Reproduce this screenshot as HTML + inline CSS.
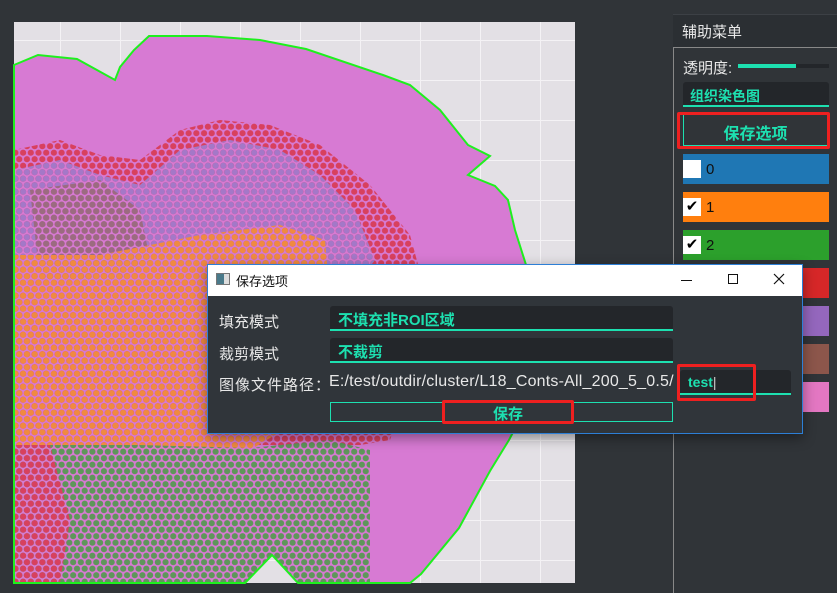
<!DOCTYPE html>
<html><head><meta charset="utf-8"><style>
*{margin:0;padding:0;box-sizing:border-box}
body{width:837px;height:593px;background:#303438;position:relative;overflow:hidden;font-family:"Liberation Sans","Noto Sans CJK SC",sans-serif}
.abs{position:absolute}
.teal{color:#1de0b0;font-weight:bold}
</style></head><body>
<svg class="abs" style="left:0;top:0" width="600" height="593">
<defs>
<pattern id="g" width="60" height="40" patternUnits="userSpaceOnUse"><rect width="60" height="40" fill="#e3e0e5"/><path d="M0 0.5H60M0.5 0V40" stroke="#f4f2f5" stroke-width="1"/></pattern>
<pattern id="pr" width="7.7" height="13" patternUnits="userSpaceOnUse"><circle cx="3.85" cy="3.2" r="3.1" fill="#d8405e"/><circle cx="0" cy="9.7" r="3.1" fill="#d8405e"/><circle cx="7.7" cy="9.7" r="3.1" fill="#d8405e"/></pattern>
<pattern id="pp" width="7.7" height="13" patternUnits="userSpaceOnUse"><circle cx="3.85" cy="3.2" r="3.1" fill="#a478c8"/><circle cx="0" cy="9.7" r="3.1" fill="#a478c8"/><circle cx="7.7" cy="9.7" r="3.1" fill="#a478c8"/></pattern>
<pattern id="pb" width="7.7" height="13" patternUnits="userSpaceOnUse"><circle cx="3.85" cy="3.2" r="3.1" fill="#9a6a78"/><circle cx="0" cy="9.7" r="3.1" fill="#9a6a78"/><circle cx="7.7" cy="9.7" r="3.1" fill="#9a6a78"/></pattern>
<pattern id="po" width="7.7" height="13" patternUnits="userSpaceOnUse"><circle cx="3.85" cy="3.2" r="3.1" fill="#f08a40"/><circle cx="0" cy="9.7" r="3.1" fill="#f08a40"/><circle cx="7.7" cy="9.7" r="3.1" fill="#f08a40"/></pattern>
<pattern id="pg" width="7.7" height="13" patternUnits="userSpaceOnUse"><circle cx="3.85" cy="3.2" r="3.1" fill="#5e965a"/><circle cx="0" cy="9.7" r="3.1" fill="#5e965a"/><circle cx="7.7" cy="9.7" r="3.1" fill="#5e965a"/></pattern>
<clipPath id="t"><path id="tp" d="M14 65L38 55L77 59L115 80L120 67L134 50L149 36L207 36L260 40L306 49L383 75L410 85L440 110L468 145L490 156L468 175L495 186L508 200L515 230L527 268L530 400L509 440L490 471L459 528L421 574L410 583L298 583L272 555L245 583L14 583Z"/></clipPath>
</defs>
<rect x="14" y="22" width="561" height="561" fill="url(#g)"/>
<g clip-path="url(#t)">
<rect x="0" y="0" width="600" height="593" fill="#d77ad3"/>
<path d="M14 150L60 140L100 155L140 160L180 130L220 120L270 125L320 145L370 185L410 235L425 290L410 380L390 440L360 445L14 445Z" fill="url(#pr)"/>
<path d="M14 170L60 160L100 175L140 185L180 150L230 140L280 150L320 175L355 210L375 260L360 280L200 270L14 270Z" fill="url(#pp)"/>
<path d="M30 190L100 180L140 210L150 260L120 280L40 280Z" fill="url(#pb)" opacity="0.9"/>
<path d="M14 255L100 255L200 235L280 225L325 240L330 300L300 420L250 450L14 450Z" fill="url(#po)"/>
<path d="M14 445L140 445L250 448L330 440L370 450L370 583L14 583Z" fill="url(#pg)"/>
<path d="M14 445L50 445L70 520L60 583L14 583Z" fill="url(#pr)"/>
</g>
<use href="#tp" fill="none" stroke="#1ef01e" stroke-width="2"/>
</svg>

<!-- right panel -->
<div class="abs" style="left:673px;top:14px;width:164px;height:34px;background:#2b2f33;border-top:1px solid #3c4045"></div>
<div class="abs" style="left:682px;top:21px;font-size:15px;color:#e8e8e8">辅助菜单</div>
<div class="abs" style="left:673px;top:47px;width:1px;height:546px;background:#888"></div>
<div class="abs" style="left:673px;top:47px;width:164px;height:1px;background:#888"></div>
<div class="abs" style="left:683px;top:57px;font-size:15px;color:#e8e8e8">透明度:</div>
<div class="abs" style="left:738px;top:64px;width:91px;height:4px;background:#23262a"></div>
<div class="abs" style="left:738px;top:64px;width:58px;height:4px;background:#1de0b0"></div>
<div class="abs" style="left:683px;top:82px;width:146px;height:25px;background:#23262a;border-radius:3px 3px 0 0;border-bottom:2px solid #1de0b0"></div>
<div class="abs teal" style="left:690px;top:86px;font-size:14px">组织染色图</div>
<div class="abs" style="left:683px;top:114px;width:145px;height:32px;border:1px solid #1de0b0"></div>
<div class="abs" style="left:677px;top:112px;width:153px;height:37px;border:3px solid #ee2020;border-radius:2px"></div>
<div class="abs teal" style="left:683px;top:120px;width:145px;text-align:center;font-size:16px">保存选项</div>
<div class="abs" style="left:683px;top:154px;width:146px;height:30px;background:#1f77b4"></div>
<div class="abs" style="left:683px;top:160px;width:18px;height:18px;background:#fff"></div>
<div class="abs" style="left:706px;top:161px;font-size:15px;color:#111">0</div>
<div class="abs" style="left:683px;top:192px;width:146px;height:30px;background:#ff7f0e"></div>
<div class="abs" style="left:683px;top:198px;width:18px;height:18px;background:#fff;font-size:15px;text-align:center;line-height:18px;color:#000">✔</div>
<div class="abs" style="left:706px;top:199px;font-size:15px;color:#111">1</div>
<div class="abs" style="left:683px;top:230px;width:146px;height:30px;background:#2ca02c"></div>
<div class="abs" style="left:683px;top:236px;width:18px;height:18px;background:#fff;font-size:15px;text-align:center;line-height:18px;color:#000">✔</div>
<div class="abs" style="left:706px;top:237px;font-size:15px;color:#111">2</div>
<div class="abs" style="left:683px;top:268px;width:146px;height:30px;background:#d62728"></div>
<div class="abs" style="left:683px;top:306px;width:146px;height:30px;background:#9467bd"></div>
<div class="abs" style="left:683px;top:344px;width:146px;height:30px;background:#8c564b"></div>
<div class="abs" style="left:683px;top:382px;width:146px;height:30px;background:#e377c2"></div>

<!-- dialog -->
<div class="abs" style="left:207px;top:264px;width:596px;height:170px;background:#30353a;border:1px solid #2d7fd6;box-shadow:0 4px 12px rgba(0,0,0,.4)"></div>
<div class="abs" style="left:208px;top:265px;width:594px;height:31px;background:#fff"></div>
<div class="abs" style="left:216px;top:273px;width:14px;height:12px;border:1px solid #777;background:linear-gradient(90deg,#4a7a8a 60%,#ddd 60%)"></div>
<div class="abs" style="left:236px;top:271px;font-size:13px;color:#111">保存选项</div>
<div class="abs" style="left:681px;top:280px;width:11px;height:1px;background:#111"></div>
<div class="abs" style="left:728px;top:274px;width:10px;height:10px;border:1px solid #111"></div>
<svg class="abs" style="left:773px;top:273px" width="12" height="12"><path d="M1 1L11 11M11 1L1 11" stroke="#111" stroke-width="1.2"/></svg>
<div class="abs" style="left:219px;top:311px;font-size:15px;color:#e8e8e8">填充模式</div>
<div class="abs" style="left:330px;top:306px;width:343px;height:25px;background:#23262a;border-radius:3px 3px 0 0;border-bottom:2px solid #1de0b0"></div>
<div class="abs teal" style="left:338px;top:309px;font-size:15px">不填充非ROI区域</div>
<div class="abs" style="left:219px;top:343px;font-size:15px;color:#e8e8e8">裁剪模式</div>
<div class="abs" style="left:330px;top:338px;width:343px;height:25px;background:#23262a;border-radius:3px 3px 0 0;border-bottom:2px solid #1de0b0"></div>
<div class="abs teal" style="left:338px;top:341px;font-size:15px">不裁剪</div>
<div class="abs" style="left:219px;top:374px;font-size:15px;color:#e8e8e8;white-space:nowrap;letter-spacing:1px">图像文件路径：</div>
<div class="abs" style="left:329px;top:373px;font-size:16px;color:#e8e8e8;white-space:nowrap;letter-spacing:0.2px">E:/test/outdir/cluster/L18_Conts-All_200_5_0.5/</div>
<div class="abs" style="left:680px;top:370px;width:111px;height:25px;background:#23262a;border-radius:3px 3px 0 0;border-bottom:2px solid #1de0b0"></div>
<div class="abs teal" style="left:688px;top:374px;font-size:14px">test<span style="font-weight:normal;color:#ccc">|</span></div>
<div class="abs" style="left:677px;top:364px;width:79px;height:37px;border:3px solid #ee2020;border-radius:2px"></div>
<div class="abs" style="left:330px;top:402px;width:343px;height:20px;border:1px solid #1de0b0"></div>
<div class="abs" style="left:442px;top:400px;width:132px;height:24px;border:3px solid #ee2020;border-radius:2px"></div>
<div class="abs teal" style="left:442px;top:403px;width:132px;text-align:center;font-size:15px">保存</div>
</body></html>
